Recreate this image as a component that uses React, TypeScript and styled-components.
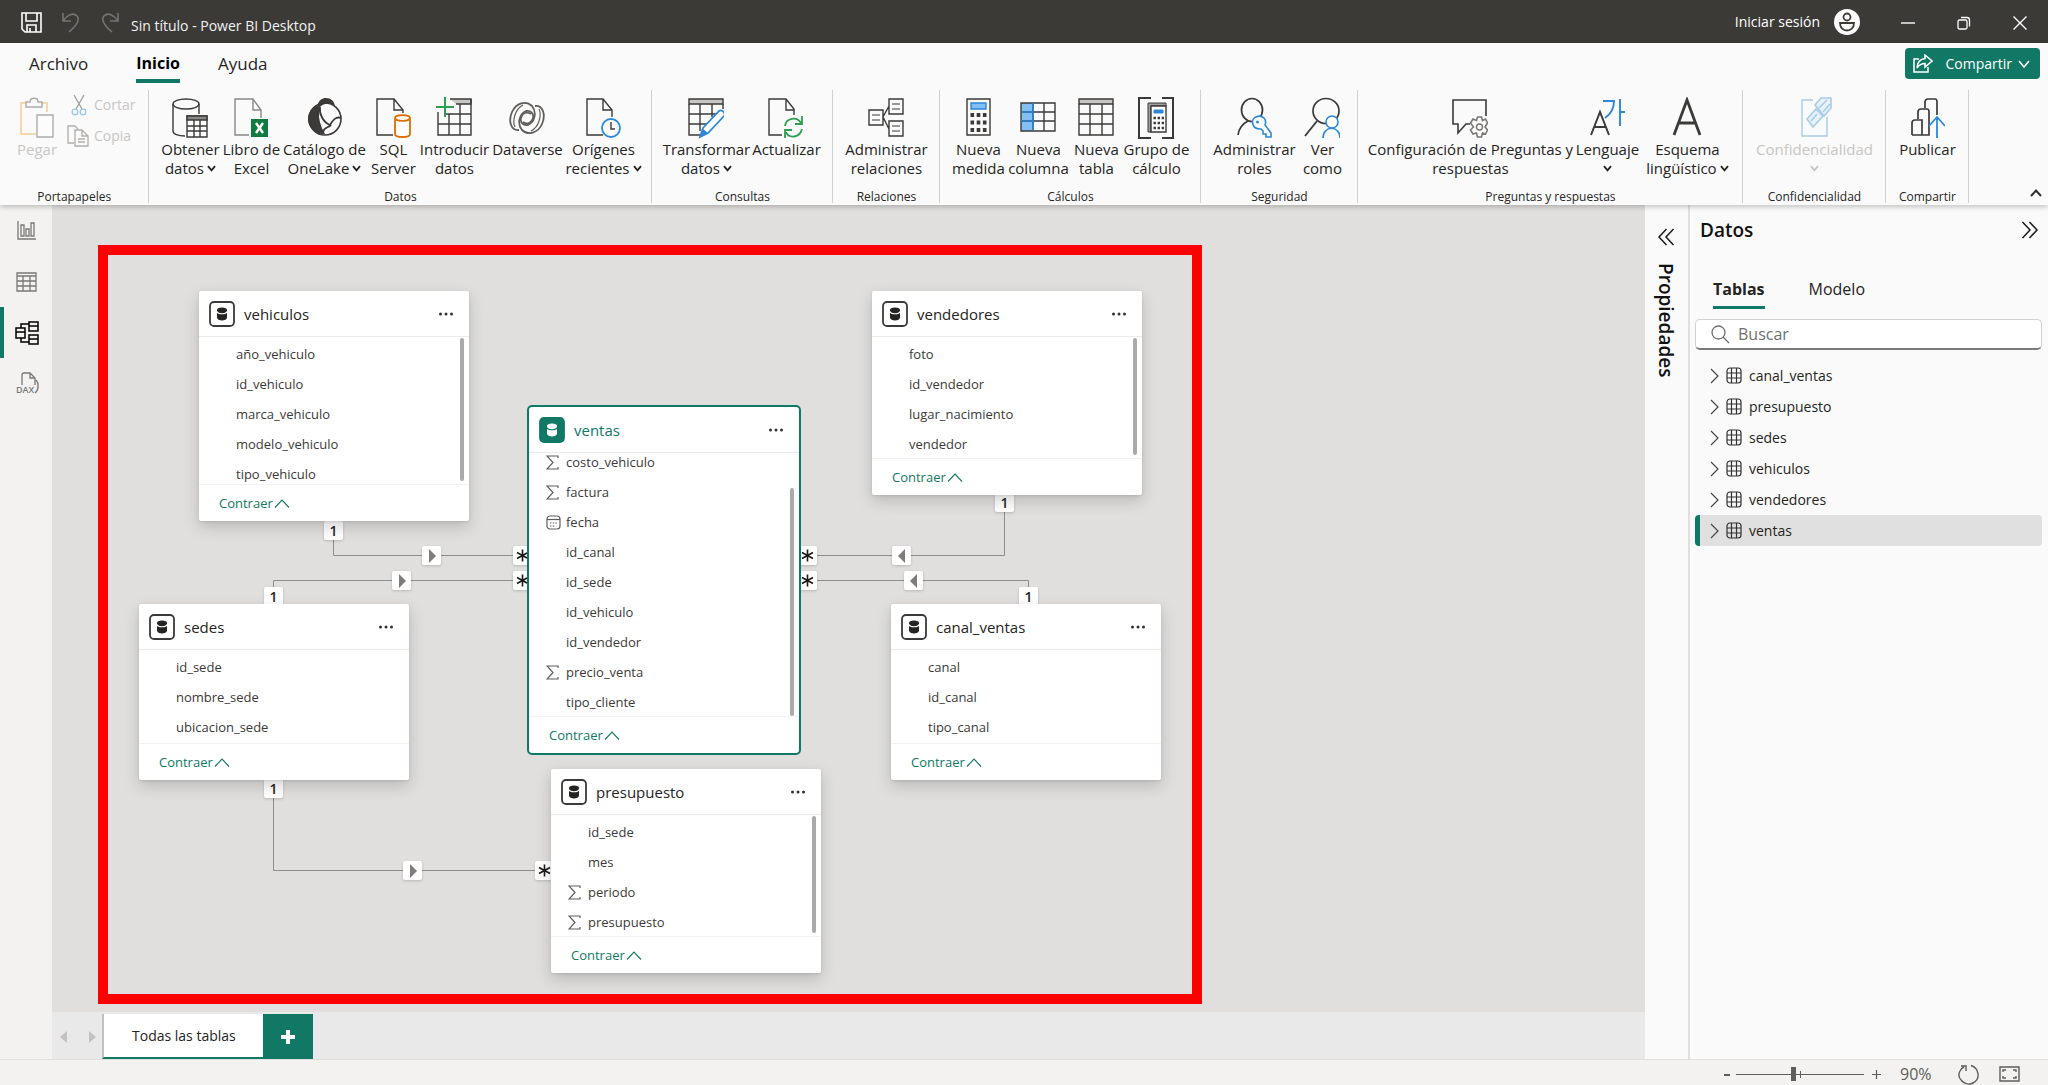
import React, { ReactNode, useState } from "react";
import styled, { createGlobalStyle, css } from "styled-components";

const color = {
  green: "#117865",
  ink: "#252423",
  line: "#3b3a39",
  blue: "#2b88d8",
  sky: "#83bff0",
  chrome: "#fafafa",
  rail: "#f3f2f1",
  canvas: "#e0dfde",
  edge: "#e1dfdd",
};

const GlobalStyle = createGlobalStyle`
  *, *::before, *::after { box-sizing: border-box; }
  body { margin: 0; font-family: "Open Sans", "Noto Sans", sans-serif; color: ${color.ink}; }
  button, input { font: inherit; color: inherit; }
  button { background: none; border: 0; padding: 0; margin: 0; cursor: pointer; }
  ul { list-style: none; margin: 0; padding: 0; }
  svg { display: block; flex: none; fill: none; }
`;

const Page = styled.div`
  display: flex;
  flex-direction: column;
  min-height: 100vh;
  background: ${color.chrome};
`;

/* ---------- title bar ---------- */

const TitleBar = styled.header`
  display: flex;
  align-items: center;
  height: 43px;
  padding: 0 21px;
  background: #3b3a37;
  color: #fff;
  font-size: 14px;
`;

const QuickAccess = styled.div`
  display: flex;
  align-items: center;
  gap: 19px;
  margin-right: 11px;
  padding-top: 2px;
`;

const DocumentName = styled.span`
  flex: 1;
  padding-top: 7px;
  color: #f3f2f1;
`;

const Account = styled.button`
  display: flex;
  align-items: center;
  gap: 14px;
  margin-right: 41px;
`;

const WindowButtons = styled.div`
  display: flex;
  align-items: center;
  gap: 42px;
  padding-top: 2px;
`;

/* ---------- ribbon ---------- */

const Ribbon = styled.section`
  position: relative;
  z-index: 2;
  background: ${color.chrome};
  box-shadow: 0 2px 5px rgba(0, 0, 0, 0.22);
`;

const TabRow = styled.div`
  display: flex;
  align-items: center;
  justify-content: space-between;
  height: 46px;
  padding: 0 8px 5px 29px;
`;

const TabList = styled.nav`
  display: flex;
  gap: 38px;
`;

const RibbonTab = styled.button<{ $active?: boolean }>`
  height: 39px;
  padding-top: 4px;
  border-bottom: 4px solid ${(p) => (p.$active ? color.green : "transparent")};
  font-size: ${(p) => (p.$active ? 16 : 17)}px;
  line-height: 31px;
  font-weight: ${(p) => (p.$active ? 700 : 400)};
  color: ${(p) => (p.$active ? "#000" : color.ink)};
  &:first-child { margin-right: 10px; }
`;

const ShareButton = styled.button`
  display: flex;
  align-items: center;
  height: 31px;
  padding: 0 10px 0 8px;
  border-radius: 4px;
  background: ${color.green};
  color: #fff;
  font-size: 14px;
  gap: 6px;
  span { margin-left: 6px; }
`;

const Groups = styled.div`
  display: flex;
  padding: 1px 0 2px;
`;

const Group = styled.div`
  display: flex;
  flex-direction: column;
  justify-content: space-between;
  height: 113px;
  padding: 0 10px;
  border-right: 1px solid #d2d0ce;
`;

const GroupItems = styled.div`
  display: flex;
`;

const GroupName = styled.div`
  text-align: center;
  font-size: 12px;
  line-height: 12px;
`;

const ToolButton = styled.button<{ $width: number }>`
  display: flex;
  flex-direction: column;
  align-items: center;
  width: ${(p) => p.$width}px;
  padding-top: 7px;
  font-size: 15px;
  line-height: 19px;
  white-space: nowrap;
  &:disabled { color: #c8c6c4; }
  > svg { margin-bottom: 1px; }
`;

const LabelLine = styled.span`
  display: flex;
  align-items: center;
  justify-content: center;
  gap: 3px;
  min-height: 19px;
`;

const ClipboardList = styled.div`
  display: flex;
  flex-direction: column;
  gap: 9px;
  padding: 4px 3px 0 3px;
`;

const ClipboardButton = styled.button`
  display: flex;
  align-items: center;
  gap: 4px;
  font-size: 14px;
  line-height: 22px;
  color: #c8c6c4;
`;

const Collapse = styled.button`
  align-self: flex-end;
  margin: 0 6px 6px auto;
`;

/* ---------- body ---------- */

const Body = styled.main`
  display: flex;
  flex: 1;
`;

const Rail = styled.nav`
  display: flex;
  flex-direction: column;
  width: 52px;
  background: ${color.rail};
`;

const RailButton = styled.button<{ $active?: boolean }>`
  display: flex;
  align-items: center;
  justify-content: center;
  height: 51px;
  border-left: 4px solid ${(p) => (p.$active ? color.green : "transparent")};
  padding-right: 3px;
  color: ${(p) => (p.$active ? "#000" : "#7a7876")};
`;

const Workspace = styled.section`
  display: flex;
  flex-direction: column;
  flex: 1;
  min-width: 0;
`;

const Canvas = styled.div`
  position: relative;
  flex: 1;
  min-height: 807px;
  overflow: hidden;
  background: ${color.canvas};
`;

const Highlight = styled.div`
  position: absolute;
  left: 46px;
  top: 40px;
  width: 1104px;
  height: 759px;
  border: 10px solid #ff0000;
  pointer-events: none;
`;

const Wires = styled.svg`
  position: absolute;
  inset: 0;
  width: 100%;
  height: 100%;
  stroke: #8f8d8b;
`;

const Marker = styled.span<{ $x: number; $y: number }>`
  position: absolute;
  left: ${(p) => p.$x - 9}px;
  top: ${(p) => p.$y - 9}px;
  display: flex;
  align-items: center;
  justify-content: center;
  width: 19px;
  height: 19px;
  border-radius: 2px;
  background: #fff;
  box-shadow: 0 1px 3px rgba(0, 0, 0, 0.18);
  font-size: 14px;
  font-weight: 600;
  line-height: 19px;
`;

/* ---------- table cards ---------- */

const Card = styled.article<{ $x: number; $y: number; $active?: boolean }>`
  position: absolute;
  left: ${(p) => p.$x}px;
  top: ${(p) => p.$y}px;
  width: 270px;
  border-radius: 2px;
  background: #fff;
  box-shadow: 0 6px 16px rgba(0, 0, 0, 0.17), 0 1px 3px rgba(0, 0, 0, 0.1);
  ${(p) =>
    p.$active &&
    css`
      outline: 2px solid ${color.green};
      border-radius: 3px;
      box-shadow: none;
    `}
`;

const CardHead = styled.header<{ $active?: boolean }>`
  display: flex;
  align-items: center;
  gap: 9px;
  height: 46px;
  padding: 0 15px 0 10px;
  border-bottom: 1px solid #edebe9;
  color: ${(p) => (p.$active ? color.green : color.ink)};
`;

const CardTitle = styled.h2`
  flex: 1;
  margin: 0;
  font-size: 15px;
  line-height: 20px;
  font-weight: 400;
`;

const CardBody = styled.div<{ $height: number }>`
  position: relative;
  height: ${(p) => p.$height}px;
  overflow: hidden;
  border-bottom: 1px solid #f3f2f1;
`;

const FieldList = styled.ul<{ $scrolled?: boolean }>`
  && { margin-top: ${(p) => (p.$scrolled ? -6 : 2)}px; }
`;

const Field = styled.li`
  display: grid;
  grid-template-columns: 20px 1fr;
  align-items: center;
  height: 30px;
  padding-left: 17px;
  font-size: 13px;
  color: #3b3a39;
`;

const ScrollThumb = styled.div<{ $from: number; $to: number }>`
  position: absolute;
  right: 5px;
  top: ${(p) => p.$from}px;
  height: ${(p) => p.$to - p.$from}px;
  width: 4px;
  border-radius: 2px;
  background: #aaaaaa;
`;

const CardFoot = styled.footer`
  display: flex;
  height: 36px;
  padding-left: 20px;
`;

const CollapseLink = styled.button`
  display: flex;
  align-items: center;
  gap: 1px;
  font-size: 13px;
  color: ${color.green};
`;

/* ---------- page tabs ---------- */

const PageTabs = styled.div`
  display: flex;
  height: 47px;
  padding-top: 2px;
  background: #e9e9e9;
`;

const TabArrows = styled.div`
  display: flex;
  align-items: center;
  justify-content: space-between;
  width: 50px;
  padding: 0 6px 0 8px;
  button { color: #c4c2c0; }
`;

const PageTab = styled.button`
  padding: 0 27px 0 28px;
  border-left: 2px solid #c0c0c0;
  border-bottom: 2px solid ${color.green};
  background: #fff;
  font-size: 14px;
`;

const AddPage = styled.button`
  display: flex;
  align-items: center;
  justify-content: center;
  width: 50px;
  background: ${color.green};
  color: #fff;
`;

/* ---------- side panes ---------- */

const PropertiesPane = styled.aside`
  display: flex;
  flex-direction: column;
  align-items: center;
  gap: 17px;
  width: 45px;
  padding: 23px 2px 0 0;
  border-right: 2px solid ${color.edge};
  background: ${color.chrome};
`;

const PropertiesTitle = styled.h2`
  margin: 0;
  writing-mode: vertical-rl;
  font-size: 19px;
  line-height: 24px;
  font-weight: 600;
  color: #111;
`;

const DataPane = styled.aside`
  width: 358px;
  padding: 12px 6px 0 5px;
  background: ${color.chrome};
`;

const PaneHead = styled.div`
  display: flex;
  align-items: center;
  justify-content: space-between;
  padding: 0 3px 0 5px;
  h2 {
    margin: 0;
    font-size: 19px;
    line-height: 26px;
    font-weight: 600;
    color: #111;
  }
`;

const PaneTabs = styled.div`
  display: flex;
  gap: 44px;
  margin: 31px 0 10px 18px;
`;

const PaneTab = styled.button<{ $active?: boolean }>`
  height: 35px;
  border-bottom: 3px solid ${(p) => (p.$active ? color.green : "transparent")};
  font-size: 16px;
  line-height: 22px;
  padding-bottom: 3px;
  font-weight: ${(p) => (p.$active ? 700 : 400)};
`;

const SearchBox = styled.label`
  display: flex;
  align-items: center;
  gap: 8px;
  height: 31px;
  padding: 0 15px;
  border: 1px solid #d1d1d1;
  border-bottom: 2px solid #7a7a7a;
  border-radius: 5px;
  background: #fff;
  color: #707070;
  input {
    flex: 1;
    min-width: 0;
    border: 0;
    padding: 0;
    outline: 0;
    background: none;
    font-size: 16px;
    line-height: 22px;
  }
  input::placeholder { color: #707070; opacity: 1; }
`;

const Tree = styled.ul`
  && { margin-top: 10px; }
`;

const TreeRow = styled.button<{ $active?: boolean }>`
  display: flex;
  align-items: center;
  width: 100%;
  height: 31px;
  padding-left: 10px;
  border-left: 5px solid ${(p) => (p.$active ? color.green : "transparent")};
  border-radius: 4px;
  background: ${(p) => (p.$active ? "#e0e0e0" : "transparent")};
  font-size: 14px;
  svg + svg { margin: 0 7px; }
`;

/* ---------- status bar ---------- */

const StatusBar = styled.footer`
  display: flex;
  align-items: center;
  justify-content: flex-end;
  height: 26px;
  padding: 3px 28px 0 0;
  border-top: 1px solid ${color.edge};
  background: ${color.rail};
  color: #605e5c;
`;

const ZoomTrack = styled.span`
  position: relative;
  display: flex;
  width: 128px;
  margin: 0 8px 0 6px;
  &::after {
    content: "";
    position: absolute;
    left: 64px;
    top: 4px;
    width: 1px;
    height: 7px;
    background: #605e5c;
  }
`;

const ZoomSlider = styled.input`
  appearance: none;
  width: 100%;
  height: 15px;
  margin: 0;
  background: linear-gradient(#605e5c, #605e5c) center / 100% 1px no-repeat;
  &::-webkit-slider-thumb {
    appearance: none;
    width: 5px;
    height: 14px;
    background: #605e5c;
  }
`;

const ZoomValue = styled.span`
  width: 34px;
  margin: 0 24px 0 19px;
  font-size: 16px;
  line-height: 20px;
`;

const StatusIcons = styled.div`
  display: flex;
  align-items: center;
  gap: 20px;
`;

/* ---------- icons ---------- */

const Art = ({ children, faded }: { children: ReactNode; faded?: boolean }) => (
  <svg width="36" height="42" viewBox="0 0 36 42" stroke={color.line} strokeWidth="1.4" opacity={faded ? 0.4 : 1}>
    {children}
  </svg>
);

const Caret = () => (
  <svg width="9" height="7" viewBox="0 0 9 7" stroke="currentColor" strokeWidth="1.8">
    <path d="M1 1.2 4.5 5.4 8 1.2" />
  </svg>
);

const art = {
  paste: (
    <Art faded>
      <path d="M8 6H2V37H17M22 6H28V15" stroke="#f2a53a" strokeWidth="2" />
      <path d="M7 10V5H11C11 0 19 0 19 5H23V10Z" />
      <path d="M18 18H34V40H18Z" fill="#fff" />
    </Art>
  ),
  database: (
    <Art>
      <ellipse cx="14" cy="7" rx="13" ry="5" />
      <path d="M1 7V34C1 37 6 39 13 39M27 7V17" />
      <path d="M15 19H35V40H15Z" fill="#fff" />
      <path d="M15 19H35V23H15Z" fill="#8a8886" />
      <path d="M15 29H35M15 34H35M22 23V40M28 23V40" />
    </Art>
  ),
  excel: (
    <Art>
      <path d="M28 21V13L20 2H2V38H16M20 2V13H28" stroke="#8a8886" />
      <path d="M18 22H35V40H18Z" fill="#107c41" stroke="none" />
      <path d="M23 26 30 36M30 26 23 36" stroke="#fff" strokeWidth="2.4" />
    </Art>
  ),
  onelake: (
    <Art>
      <ellipse cx="19" cy="22" rx="16" ry="16" strokeWidth="1.6" />
      <path d="M11 9C13 3 16 1 20 1C25 1 28 4 29 9C24 6 18 6 14 10L13 20C14 27 16 32 19 37C10 38 2 31 2 22C2 16 6 10 11 9Z" fill={color.line} stroke="none" />
      <path d="M14 10C13 17 17 25 24 28C27 23 30 19 35 21M17 35C18 30 22 31 25 28" strokeWidth="1.8" />
    </Art>
  ),
  sql: (
    <Art>
      <path d="M28 16V13L19 2H2V38H18M19 2V13H28" />
      <path d="M20 22V37C20 41 35 41 35 37V22" stroke="#e06c00" strokeWidth="1.8" fill="#fff" />
      <ellipse cx="27.5" cy="21" rx="7.5" ry="2.8" stroke="#e06c00" strokeWidth="1.8" fill="#fff" />
    </Art>
  ),
  enter: (
    <Art>
      <path d="M14 2H35V7H20" fill="#c8c6c4" />
      <path d="M2 15V38H35V2M2 27H35M8 17H35M13 17V38M24 7V38" />
      <path d="M0 10H18M9 0V20" stroke="#2f9e50" strokeWidth="2" />
    </Art>
  ),
  dataverse: (
    <Art>
      <g stroke="#605e5c">
        <path d="M10 33C2 34-1 24 3 15C7 6 17 3 23 9C28 15 26 25 19 28C14 29 11 25 12 21C13 16 18 14 22 17" strokeWidth="1.8" />
        <path d="M26 9C34 8 37 18 33 27C29 36 19 39 13 33C8 27 10 17 17 14C22 13 25 17 24 21C23 26 18 28 14 25" strokeWidth="1.8" />
        <path d="M6 30C3 24 6 12 14 8M30 12C33 18 30 30 22 34" strokeWidth="1.2" />
      </g>
    </Art>
  ),
  recent: (
    <Art>
      <path d="M27 20V13L18 2H2V38H18M18 2V13H27" />
      <circle cx="26" cy="31" r="9" stroke={color.blue} strokeWidth="1.8" fill="#fff" />
      <path d="M26 25V32H30" />
    </Art>
  ),
  transform: (
    <Art>
      <path d="M1 2H35V7H1Z" fill="#c8c6c4" />
      <path d="M1 7V38H12M1 17H28M1 27H19M12 7V34M24 7V20M35 7V12" />
      <path d="M15 31 31 14C34 12 38 16 36 19L20 36 12 40Z" fill="#fff" stroke={color.blue} strokeWidth="1.8" />
      <path d="M15 32 20 36 12 40Z" fill={color.blue} stroke="none" />
    </Art>
  ),
  refresh: (
    <Art>
      <path d="M26 18V12L18 2H1V38H14M18 2V13H26" />
      <path d="M17 29C18 21 29 19 33 26M34 19V27H27M34 32C32 41 21 42 18 35M17 41V33H24" stroke="#2f9e50" strokeWidth="1.8" />
    </Art>
  ),
  relations: (
    <Art>
      <path d="M1 13H15V28H1Z M21 2H35V17H21Z M21 24H35V39H21Z M15 20 21 9M15 20 21 32" />
      <path d="M4 18H12M4 23H12M24 7H32M24 12H32M24 29H32M24 34H32" strokeWidth="1.1" />
    </Art>
  ),
  measure: (
    <Art>
      <path d="M7 2H30V38H7Z" />
      <path d="M11 6H26V12H11Z" fill={color.sky} stroke={color.blue} />
      <path d="M10.5 18H26.5M10.5 25.5H26.5M10.5 33H26.5" strokeWidth="4" strokeDasharray="3.6 2.6" />
    </Art>
  ),
  column: (
    <Art>
      <path d="M1 6H13V34H1Z" fill={color.sky} stroke="none" />
      <path d="M1 6H35V34H1ZM1 15H35M1 24H35M13 6V34M24 6V34" />
      <path d="M13 6V34M1 15H13M1 24H13" stroke={color.blue} />
    </Art>
  ),
  table: (
    <Art>
      <path d="M1 2H35V7H1Z" fill="#c8c6c4" />
      <path d="M1 7V38H35V7M1 17H35M1 27H35M12 7V38M24 7V38" />
    </Art>
  ),
  calcGroup: (
    <Art>
      <path d="M13 1H1V41H13M24 1H35V41H24" strokeWidth="2" />
      <path d="M10 35V6H28V9H13V35Z" fill="#a19f9d" strokeWidth="1" />
      <path d="M13 9H28V35H13Z" fill="#fff" />
      <path d="M16 13H25V16H16Z" fill={color.blue} stroke={color.blue} strokeWidth="1" />
      <path d="M15.5 21H26M15.5 26H26M15.5 31H26" strokeWidth="2.6" strokeDasharray="2.4 1.7" />
    </Art>
  ),
  roles: (
    <Art>
      <ellipse cx="16" cy="13" rx="10.5" ry="11.5" strokeWidth="1.7" />
      <path d="M2 38C3 31 6 27 12 24" strokeWidth="1.7" />
      <path d="M24 32C16 32 14 22 20 20C27 17 31 23 29 28L35 36V40H30V37H27V34L25 32Z" fill="#fff" stroke={color.blue} strokeWidth="1.6" />
      <circle cx="21.5" cy="25" r="1.5" fill={color.blue} stroke="none" />
    </Art>
  ),
  viewAs: (
    <Art>
      <ellipse cx="22" cy="14" rx="13" ry="12.5" strokeWidth="1.7" />
      <path d="M1 39 13 24" strokeWidth="1.9" />
      <circle cx="28" cy="25" r="6" fill="#fff" stroke={color.blue} strokeWidth="1.6" />
      <path d="M19 41C19 28 36 28 36 41" stroke={color.blue} strokeWidth="1.6" />
    </Art>
  ),
  qna: (
    <Art>
      <path d="M18 27H14L6 36V27H1V3H34V19" strokeWidth="1.6" />
      <g stroke="#7a7876">
        <path d="M25.5 20H29.5L30.5 23.5 33.5 22 35.5 26 33 30 35.5 33 33.5 37 30.5 36 29.5 40H25.5L24.500 36 21 37 18.500 33 21.500 30 18.500 26 21 22 24.500 23.500Z" strokeWidth="1.6" />
        <circle cx="27.500" cy="30" r="3" />
      </g>
    </Art>
  ),
  language: (
    <Art>
      <path d="M2 38 11 15 20 38M6 30H17" strokeWidth="2" />
      <path d="M14 4H25C25 11 22 17 16 21M31 2V29M31 15H36" stroke={color.blue} strokeWidth="1.9" />
    </Art>
  ),
  schema: (
    <Art>
      <path d="M5 38 18 3 31 38M10 26H26" strokeWidth="2.8" />
    </Art>
  ),
  sensitivity: (
    <Art faded>
      <g stroke={color.blue}>
        <path d="M17 3H6V39H31V20" />
        <path d="M11 22 20 12 27 19 17 30ZM15 24 21 17" fill="#cfe4f7" strokeWidth="1.6" />
        <path d="M19 8 25 1 35 1 35 11 28 19ZM23 11 31 3M27 15 34 7" fill="#cfe4f7" strokeWidth="1.6" />
      </g>
    </Art>
  ),
  publish: (
    <Art>
      <path d="M3 38V26C3 24 4 23 6 23H13V38H3M9 22V15C9 13 10 12 12 12H18C20 12 20 13 20 15V38H13M16 11V5C16 3 17 2 19 2H26C28 2 28 3 28 5V18" strokeWidth="1.7" />
      <path d="M28 41V21M20 29 28 20 36 29" stroke={color.blue} strokeWidth="1.8" />
    </Art>
  ),
};

const EntityIcon = ({ active }: { active?: boolean }) => {
  const fg = active ? "#fff" : "#252423";
  const bg = active ? color.green : "#fff";
  return (
    <svg width="26" height="26" viewBox="0 0 26 26">
      <rect x="1" y="1" width="24" height="24" rx="4" fill={bg} stroke={active ? color.green : "#3b3a39"} strokeWidth="1.8" />
      <path d="M8 9V16.500C8 20.500 18 20.500 18 16.500V9Z" fill={fg} />
      <ellipse cx="13" cy="9" rx="5" ry="2.500" fill={fg} />
      <path d="M8 10.500C9 13.500 17 13.500 18 10.500" stroke={bg} strokeWidth="1.2" />
    </svg>
  );
};

const Sigma = () => (
  <svg width="13" height="15" viewBox="0 0 13 15" stroke="#605e5c" strokeWidth="1.2">
    <path d="M12 3V1H1L7 7.5 1 14H12V12" />
  </svg>
);

const Calendar = () => (
  <svg width="15" height="15" viewBox="0 0 15 15" stroke="#605e5c" strokeWidth="1.2">
    <rect x="1" y="1" width="13" height="13" rx="3" />
    <path d="M1 4.5H14" />
    <path d="M4 8H11M4 11H9" strokeDasharray="1.5 1.2" />
  </svg>
);

const DoubleChevron = ({ left }: { left?: boolean }) => (
  <svg width="18" height="18" viewBox="0 0 18 18" stroke="#1b1a19" strokeWidth="1.5">
    <path d={left ? "M9.5 1 2 9 9.5 17M16.5 1 9 9 16.5 17" : "M1.5 1 9 9 1.5 17M8.5 1 16 9 8.5 17"} />
  </svg>
);

const TableGlyph = () => (
  <svg width="16" height="17" viewBox="0 0 16 17" stroke="#323130" strokeWidth="1.2">
    <rect x="1" y="1" width="14" height="15" rx="3" />
    <path d="M5.5 1V16M10.5 1V16M1 6H15M1 11H15" />
  </svg>
);

const Triangle = ({ left }: { left?: boolean }) => (
  <svg width="8" height="14" viewBox="0 0 8 14">
    <path d={left ? "M7 0V14L0 7Z" : "M1 0V14L8 7Z"} fill="#7f7d7b" />
  </svg>
);

const Star = () => (
  <svg width="13" height="13" viewBox="0 0 13 13" stroke="#1b1a19" strokeWidth="1.6">
    <path d="M6.5 0.5V12.5M1 3.5 12 9.5M12 3.5 1 9.5" />
  </svg>
);

/* ---------- data ---------- */

type Tool = { label: string[]; icon: ReactNode; width: number; menu?: boolean; disabled?: boolean };

const groups: { name: string; tools: Tool[] }[] = [
  {
    name: "Datos",
    tools: [
      { label: ["Obtener", "datos"], icon: art.database, width: 62, menu: true },
      { label: ["Libro de", "Excel"], icon: art.excel, width: 60 },
      { label: ["Catálogo de", "OneLake"], icon: art.onelake, width: 86, menu: true },
      { label: ["SQL", "Server"], icon: art.sql, width: 52 },
      { label: ["Introducir", "datos"], icon: art.enter, width: 70 },
      { label: ["Dataverse"], icon: art.dataverse, width: 76 },
      { label: ["Orígenes", "recientes"], icon: art.recent, width: 76, menu: true },
    ],
  },
  {
    name: "Consultas",
    tools: [
      { label: ["Transformar", "datos"], icon: art.transform, width: 88, menu: true },
      { label: ["Actualizar"], icon: art.refresh, width: 72 },
    ],
  },
  { name: "Relaciones", tools: [{ label: ["Administrar", "relaciones"], icon: art.relations, width: 86 }] },
  {
    name: "Cálculos",
    tools: [
      { label: ["Nueva", "medida"], icon: art.measure, width: 56 },
      { label: ["Nueva", "columna"], icon: art.column, width: 64 },
      { label: ["Nueva", "tabla"], icon: art.table, width: 52 },
      { label: ["Grupo de", "cálculo"], icon: art.calcGroup, width: 68 },
    ],
  },
  {
    name: "Seguridad",
    tools: [
      { label: ["Administrar", "roles"], icon: art.roles, width: 86 },
      { label: ["Ver", "como"], icon: art.viewAs, width: 50 },
    ],
  },
  {
    name: "Preguntas y respuestas",
    tools: [
      { label: ["Configuración de Preguntas y", "respuestas"], icon: art.qna, width: 204 },
      { label: ["Lenguaje", ""], icon: art.language, width: 70, menu: true },
      { label: ["Esquema", "lingüístico"], icon: art.schema, width: 90, menu: true },
    ],
  },
  {
    name: "Confidencialidad",
    tools: [{ label: ["Confidencialidad", ""], icon: art.sensitivity, width: 122, menu: true, disabled: true }],
  },
  { name: "Compartir", tools: [{ label: ["Publicar"], icon: art.publish, width: 62 }] },
];

type FieldInfo = { name: string; kind?: "sum" | "date" };
type TableInfo = {
  name: string;
  x: number;
  y: number;
  bodyHeight: number;
  fields: FieldInfo[];
  thumb?: [number, number];
  active?: boolean;
};

const plain = (...names: string[]): FieldInfo[] => names.map((name) => ({ name }));

const tables: TableInfo[] = [
  {
    name: "vehiculos", x: 147, y: 86, bodyHeight: 148, thumb: [1, 144],
    fields: plain("año_vehiculo", "id_vehiculo", "marca_vehiculo", "modelo_vehiculo", "tipo_vehiculo"),
  },
  {
    name: "vendedores", x: 820, y: 86, bodyHeight: 122, thumb: [1, 118],
    fields: plain("foto", "id_vendedor", "lugar_nacimiento", "vendedor"),
  },
  {
    name: "sedes", x: 87, y: 399, bodyHeight: 94,
    fields: plain("id_sede", "nombre_sede", "ubicacion_sede"),
  },
  {
    name: "canal_ventas", x: 839, y: 399, bodyHeight: 94,
    fields: plain("canal", "id_canal", "tipo_canal"),
  },
  {
    name: "presupuesto", x: 499, y: 564, bodyHeight: 122, thumb: [1, 118],
    fields: [...plain("id_sede", "mes"), { name: "periodo", kind: "sum" }, { name: "presupuesto", kind: "sum" }],
  },
  {
    name: "ventas", x: 477, y: 202, bodyHeight: 264, thumb: [35, 263], active: true,
    fields: [
      { name: "costo_vehiculo", kind: "sum" },
      { name: "factura", kind: "sum" },
      { name: "fecha", kind: "date" },
      ...plain("id_canal", "id_sede", "id_vehiculo", "id_vendedor"),
      { name: "precio_venta", kind: "sum" },
      { name: "tipo_cliente" },
    ],
  },
];

const wires = [
  "M281.5 316V350.5H475",
  "M221.5 399V375.5H475",
  "M221.5 575V665.5H499",
  "M952.5 289V350.5H749",
  "M976.5 399V375.5H749",
];

const markers: { x: number; y: number; kind: "one" | "many" | "right" | "left" }[] = [
  { x: 281, y: 325, kind: "one" },
  { x: 221, y: 391, kind: "one" },
  { x: 221, y: 583, kind: "one" },
  { x: 952, y: 297, kind: "one" },
  { x: 976, y: 391, kind: "one" },
  { x: 379, y: 350, kind: "right" },
  { x: 349, y: 375, kind: "right" },
  { x: 360, y: 665, kind: "right" },
  { x: 849, y: 350, kind: "left" },
  { x: 861, y: 375, kind: "left" },
  { x: 470, y: 350, kind: "many" },
  { x: 470, y: 375, kind: "many" },
  { x: 492, y: 665, kind: "many" },
  { x: 755, y: 350, kind: "many" },
  { x: 755, y: 375, kind: "many" },
];

const treeItems = ["canal_ventas", "presupuesto", "sedes", "vehiculos", "vendedores", "ventas"];

/* ---------- parts ---------- */

const ToolItem = ({ tool }: { tool: Tool }) => (
  <ToolButton $width={tool.width} disabled={tool.disabled}>
    {tool.icon}
    {tool.label.map((line, i) => (
      <LabelLine key={i}>
        {line}
        {tool.menu && i === tool.label.length - 1 && <Caret />}
      </LabelLine>
    ))}
  </ToolButton>
);

const TableCard = ({ table }: { table: TableInfo }) => (
  <Card $x={table.x} $y={table.y} $active={table.active}>
    <CardHead $active={table.active}>
      <EntityIcon active={table.active} />
      <CardTitle>{table.name}</CardTitle>
      <button aria-label="Más opciones">
        <svg width="16" height="4" viewBox="0 0 16 4">
          <circle cx="2.5" cy="2" r="1.5" fill="#323130" />
          <circle cx="8" cy="2" r="1.5" fill="#323130" />
          <circle cx="13.5" cy="2" r="1.5" fill="#323130" />
        </svg>
      </button>
    </CardHead>
    <CardBody $height={table.bodyHeight}>
      <FieldList $scrolled={table.active}>
        {table.fields.map((f) => (
          <Field key={f.name}>
            <span>{f.kind === "sum" ? <Sigma /> : f.kind === "date" ? <Calendar /> : null}</span>
            {f.name}
          </Field>
        ))}
      </FieldList>
      {table.thumb && <ScrollThumb $from={table.thumb[0]} $to={table.thumb[1]} />}
    </CardBody>
    <CardFoot>
      <CollapseLink>
        Contraer
        <svg width="16" height="9" viewBox="0 0 16 9" stroke={color.green} strokeWidth="1.1">
          <path d="M1 8.5 8 1 15 8.5" />
        </svg>
      </CollapseLink>
    </CardFoot>
  </Card>
);

export default function App() {
  const [zoom, setZoom] = useState(90);
  return (
    <Page>
      <GlobalStyle />
      <TitleBar>
        <QuickAccess>
          <button aria-label="Guardar">
            <svg width="21" height="21" viewBox="0 0 21 21" stroke="#fff" strokeWidth="1.6">
              <path d="M1 1H20V20H4L1 17ZM5 1V9H16V1M6 20V13H15V20M9 16V20" />
            </svg>
          </button>
          <button aria-label="Deshacer">
            <svg width="20" height="21" viewBox="0 0 20 21" stroke="#767472" strokeWidth="1.6">
              <path d="M2 1V9H10M2 9C6 3 12 0 16 4C20 9 14 15 8 20" />
            </svg>
          </button>
          <button aria-label="Rehacer">
            <svg width="20" height="21" viewBox="0 0 20 21" stroke="#767472" strokeWidth="1.6">
              <path d="M18 1V9H10M18 9C14 3 8 0 4 4C0 9 6 15 12 20" />
            </svg>
          </button>
        </QuickAccess>
        <DocumentName>Sin título - Power BI Desktop</DocumentName>
        <Account>
          Iniciar sesión
          <svg width="26" height="26" viewBox="0 0 26 26">
            <circle cx="13" cy="13" r="13" fill="#fff" />
            <circle cx="13" cy="8" r="3.5" stroke="#3b3a37" strokeWidth="1.8" />
            <path d="M6 14H20C20 24 6 24 6 14Z" stroke="#3b3a37" strokeWidth="1.8" />
          </svg>
        </Account>
        <WindowButtons>
          <button aria-label="Minimizar">
            <svg width="14" height="14" viewBox="0 0 14 14" stroke="#fff" strokeWidth="1.4"><path d="M0 7H14" /></svg>
          </button>
          <button aria-label="Restaurar">
            <svg width="14" height="14" viewBox="0 0 14 14" stroke="#fff" strokeWidth="1.3">
              <rect x="1" y="4" width="9" height="9" rx="1.5" />
              <path d="M4 1.5H10C12 1.5 12.5 2 12.5 4V10.5" />
            </svg>
          </button>
          <button aria-label="Cerrar">
            <svg width="14" height="14" viewBox="0 0 14 14" stroke="#fff" strokeWidth="1.4"><path d="M0.5 0.5 13.5 13.5M13.5 0.5 0.5 13.5" /></svg>
          </button>
        </WindowButtons>
      </TitleBar>

      <Ribbon>
        <TabRow>
          <TabList>
            <RibbonTab>Archivo</RibbonTab>
            <RibbonTab $active>Inicio</RibbonTab>
            <RibbonTab>Ayuda</RibbonTab>
          </TabList>
          <ShareButton>
            <svg width="20" height="19" viewBox="0 0 20 19" stroke="#fff" strokeWidth="1.5">
              <path d="M6 5H1V18H15V13" />
              <path d="M12 1 19 7 12 13V9.5C8 9.5 6 11 4 14C4.5 8 7 5 12 4.5Z" />
            </svg>
            <span>Compartir</span>
            <svg width="12" height="8" viewBox="0 0 12 8" stroke="#fff" strokeWidth="1.5"><path d="M1 1 6 7 11 1" /></svg>
          </ShareButton>
        </TabRow>
        <Groups>
          <Group>
            <GroupItems>
              <ToolButton $width={54} disabled>
                {art.paste}
                <LabelLine>Pegar</LabelLine>
              </ToolButton>
              <ClipboardList>
                <ClipboardButton disabled>
                  <svg width="23" height="22" viewBox="0 0 23 22" stroke="#a19f9d" strokeWidth="1.3">
                    <path d="M7 1 15 15M17 1 9 15" />
                    <circle cx="8" cy="18" r="2.8" stroke="#9cc8ee" />
                    <circle cx="16" cy="18" r="2.8" stroke="#9cc8ee" />
                  </svg>
                  Cortar
                </ClipboardButton>
                <ClipboardButton disabled>
                  <svg width="23" height="22" viewBox="0 0 23 22" stroke="#b0aeac" strokeWidth="1.3">
                    <path d="M7 18H1V1H8L11 4M8 5H15L21 11V21H8ZM15 5V11H21M11 14H18M11 17H18" />
                  </svg>
                  Copia
                </ClipboardButton>
              </ClipboardList>
            </GroupItems>
            <GroupName>Portapapeles</GroupName>
          </Group>
          {groups.map((g) => (
            <Group key={g.name}>
              <GroupItems>
                {g.tools.map((t) => (
                  <ToolItem key={t.label.join(" ")} tool={t} />
                ))}
              </GroupItems>
              <GroupName>{g.name}</GroupName>
            </Group>
          ))}
          <Collapse aria-label="Contraer la cinta">
            <svg width="12" height="8" viewBox="0 0 12 8" stroke="#323130" strokeWidth="2"><path d="M1 7 6 1.5 11 7" /></svg>
          </Collapse>
        </Groups>
      </Ribbon>

      <Body>
        <Rail>
          <RailButton aria-label="Vista de informe">
            <svg width="19" height="19" viewBox="0 0 19 19" stroke="currentColor" strokeWidth="1.3">
              <path d="M1 0V18H19M4 4H7V15H4ZM9 8H12V15H9ZM14 2H17V15H14Z" />
            </svg>
          </RailButton>
          <RailButton aria-label="Vista de tabla">
            <svg width="21" height="20" viewBox="0 0 21 20" stroke="currentColor" strokeWidth="1.3">
              <path d="M1 1H20V19H1ZM1 4H20M1 9H20M1 14H20M7 4V19M14 4V19" />
            </svg>
          </RailButton>
          <RailButton aria-label="Vista de modelo" $active>
            <svg width="24" height="24" viewBox="0 0 24 24" stroke="currentColor" strokeWidth="1.5">
              <path d="M1 7H10V17H1ZM1 11H10M14 1H23V10H14ZM14 5H23M14 14H23V23H14ZM14 18H23M6 7V3H14M6 17V21H14" />
            </svg>
          </RailButton>
          <RailButton aria-label="Vista de consultas DAX">
            <svg width="26" height="28" viewBox="0 0 26 28" stroke="currentColor" strokeWidth="1.3">
              <path d="M8 15V5C8 4 9 3 10 3H16L21 8V15M16 3V8H21M22 10C25 13 25 20 21 23" />
              <text x="2" y="23" fontSize="9" fontWeight="600" fill="currentColor" stroke="none">DAX</text>
            </svg>
          </RailButton>
        </Rail>

        <Workspace>
          <Canvas>
            <Wires>
              {wires.map((d) => (
                <path key={d} d={d} />
              ))}
            </Wires>
            {markers.map((m, i) => (
              <Marker key={i} $x={m.x} $y={m.y}>
                {m.kind === "one" ? "1" : m.kind === "many" ? <Star /> : <Triangle left={m.kind === "left"} />}
              </Marker>
            ))}
            {tables.map((t) => (
              <TableCard key={t.name} table={t} />
            ))}
            <Highlight />
          </Canvas>
          <PageTabs>
            <TabArrows>
              <button aria-label="Página anterior">
                <svg width="7" height="12" viewBox="0 0 7 12"><path d="M7 0V12L0 6Z" fill="currentColor" /></svg>
              </button>
              <button aria-label="Página siguiente">
                <svg width="7" height="12" viewBox="0 0 7 12"><path d="M0 0V12L7 6Z" fill="currentColor" /></svg>
              </button>
            </TabArrows>
            <PageTab>Todas las tablas</PageTab>
            <AddPage aria-label="Agregar página">
              <svg width="14" height="14" viewBox="0 0 14 14" stroke="#fff" strokeWidth="4"><path d="M7 0V14M0 7H14" /></svg>
            </AddPage>
          </PageTabs>
        </Workspace>

        <PropertiesPane>
          <button aria-label="Expandir propiedades"><DoubleChevron left /></button>
          <PropertiesTitle>Propiedades</PropertiesTitle>
        </PropertiesPane>

        <DataPane>
          <PaneHead>
            <h2>Datos</h2>
            <button aria-label="Contraer datos"><DoubleChevron /></button>
          </PaneHead>
          <PaneTabs>
            <PaneTab $active>Tablas</PaneTab>
            <PaneTab>Modelo</PaneTab>
          </PaneTabs>
          <SearchBox>
            <svg width="19" height="19" viewBox="0 0 19 19" stroke="#707070" strokeWidth="1.3">
              <circle cx="7.5" cy="7.5" r="6.5" />
              <path d="M12 12 18 18" />
            </svg>
            <input type="text" placeholder="Buscar" aria-label="Buscar" />
          </SearchBox>
          <Tree>
            {treeItems.map((name) => (
              <li key={name}>
                <TreeRow $active={name === "ventas"}>
                  <svg width="9" height="16" viewBox="0 0 9 16" stroke="#484644" strokeWidth="1.2"><path d="M1 1 8 8 1 15" /></svg>
                  <TableGlyph />
                  {name}
                </TreeRow>
              </li>
            ))}
          </Tree>
        </DataPane>
      </Body>

      <StatusBar>
        <button aria-label="Alejar">
          <svg width="6" height="9" viewBox="0 0 6 9" stroke="#605e5c" strokeWidth="2"><path d="M0 5H6" /></svg>
        </button>
        <ZoomTrack>
          <ZoomSlider
            type="range"
            aria-label="Zoom"
            min={10}
            max={190}
            value={zoom}
            onChange={(e) => setZoom(Number(e.target.value))}
          />
        </ZoomTrack>
        <button aria-label="Acercar">
          <svg width="9" height="9" viewBox="0 0 9 9" stroke="#605e5c" strokeWidth="1.2"><path d="M0 4.5H9M4.5 0V9" /></svg>
        </button>
        <ZoomValue>{zoom}%</ZoomValue>
        <StatusIcons>
          <button aria-label="Restablecer">
            <svg width="21" height="21" viewBox="0 0 21 21" stroke="#605e5c" strokeWidth="1.4">
              <path d="M13 1.5C21 4 23 15 15 19C7 23-2 14 2 7C3 5 4 4 6 3M3 2H8V7" />
            </svg>
          </button>
          <button aria-label="Ajustar a la página">
            <svg width="21" height="16" viewBox="0 0 21 16" stroke="#605e5c" strokeWidth="1.4">
              <path d="M1 1H20V15H1ZM4 6V4H7M14 4H17V6M17 10V12H14M7 12H4V10" />
            </svg>
          </button>
        </StatusIcons>
      </StatusBar>
    </Page>
  );
}
